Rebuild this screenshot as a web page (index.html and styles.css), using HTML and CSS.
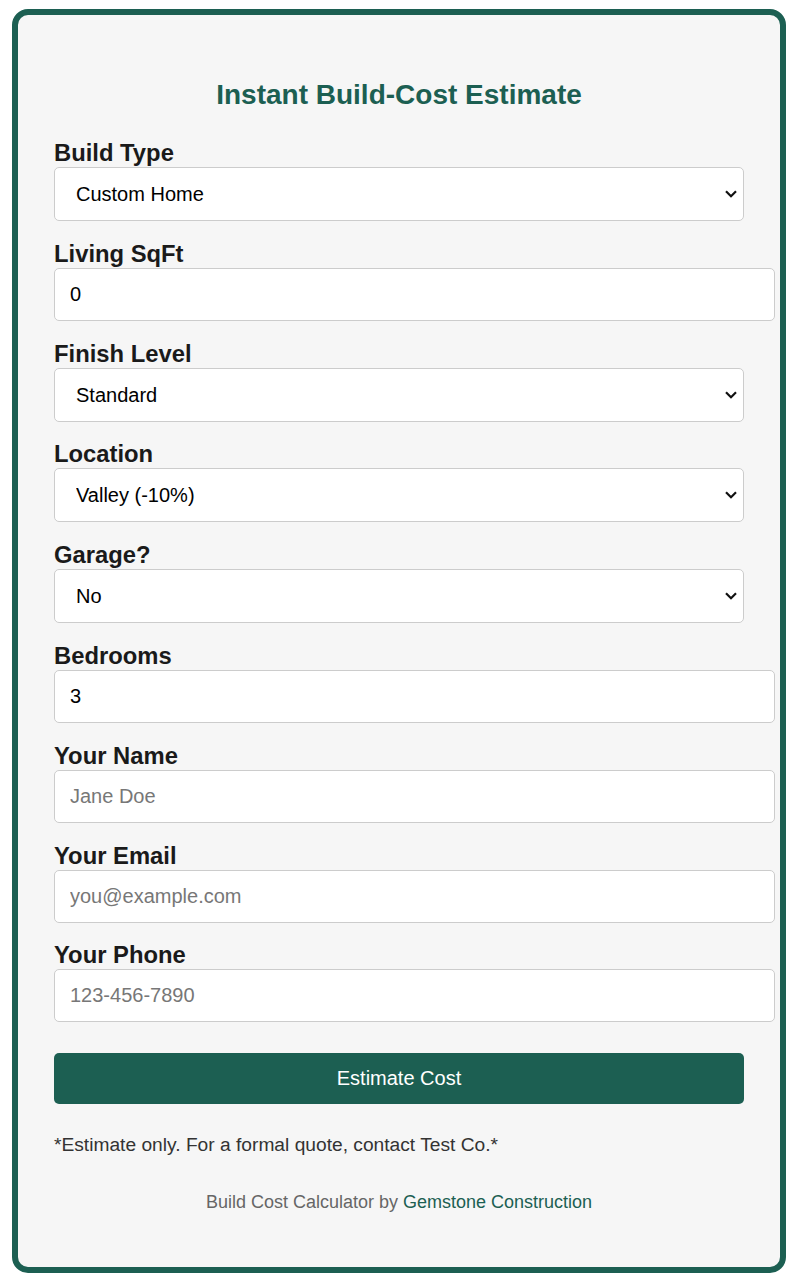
FILE: index.html
```html
<!DOCTYPE html>
<html lang="en">
<head>
    <meta charset="UTF-8">
    <meta name="viewport" content="width=device-width, initial-scale=1.0">
    <title>Build Cost Calculator</title>
    <link rel="stylesheet" href="styles.css">
</head>
<body>
    <div class="calc-box">
        <h2 class="calc-title">Instant Build-Cost Estimate</h2>

        <form class="calc-form" onsubmit="return false;">
            <div class="field">
                <label for="buildType">Build Type</label>
                <div class="select-wrap">
                    <select id="buildType" class="field-select">
                        <option>Custom Home</option>
                        <option>Addition</option>
                        <option>Remodel</option>
                    </select>
                    <svg class="chevron" width="12" height="8" viewBox="0 0 12 8"><path d="M1 1.2 6 6.2 11 1.2" fill="none" stroke="#111" stroke-width="2.2"/></svg>
                </div>
            </div>

            <div class="field">
                <label for="sqft">Living SqFt</label>
                <input type="number" id="sqft" class="field-input" value="0">
            </div>

            <div class="field">
                <label for="finish">Finish Level</label>
                <div class="select-wrap">
                    <select id="finish" class="field-select">
                        <option>Standard</option>
                        <option>Premium</option>
                        <option>Luxury</option>
                    </select>
                    <svg class="chevron" width="12" height="8" viewBox="0 0 12 8"><path d="M1 1.2 6 6.2 11 1.2" fill="none" stroke="#111" stroke-width="2.2"/></svg>
                </div>
            </div>

            <div class="field">
                <label for="location">Location</label>
                <div class="select-wrap">
                    <select id="location" class="field-select">
                        <option>Valley (-10%)</option>
                        <option>City</option>
                        <option>Mountain (+15%)</option>
                    </select>
                    <svg class="chevron" width="12" height="8" viewBox="0 0 12 8"><path d="M1 1.2 6 6.2 11 1.2" fill="none" stroke="#111" stroke-width="2.2"/></svg>
                </div>
            </div>

            <div class="field">
                <label for="garage">Garage?</label>
                <div class="select-wrap">
                    <select id="garage" class="field-select">
                        <option>No</option>
                        <option>Yes</option>
                    </select>
                    <svg class="chevron" width="12" height="8" viewBox="0 0 12 8"><path d="M1 1.2 6 6.2 11 1.2" fill="none" stroke="#111" stroke-width="2.2"/></svg>
                </div>
            </div>

            <div class="field">
                <label for="bedrooms">Bedrooms</label>
                <input type="number" id="bedrooms" class="field-input" value="3">
            </div>

            <div class="field">
                <label for="name">Your Name</label>
                <input type="text" id="name" class="field-input" placeholder="Jane Doe">
            </div>

            <div class="field">
                <label for="email">Your Email</label>
                <input type="email" id="email" class="field-input" placeholder="you@example.com">
            </div>

            <div class="field">
                <label for="phone">Your Phone</label>
                <input type="tel" id="phone" class="field-input" placeholder="123-456-7890">
            </div>

            <button type="submit" class="calc-btn">Estimate Cost</button>
        </form>

        <p class="disclaimer">*Estimate only. For a formal quote, contact Test Co.*</p>

        <p class="credit">Build Cost Calculator by <a href="#">Gemstone Construction</a></p>
    </div>
</body>
</html>
```

FILE: styles.css
```css
body {
    margin: 0;
    padding: 9px 16px 13px 12px;
    background: #fff;
    font-family: "Liberation Sans", Arial, Helvetica, sans-serif;
    color: #1a1a1a;
}

.calc-box {
    background: #f6f6f6;
    border: 6px solid #1c5f52;
    border-radius: 16px;
    padding: 0 36px;
}

.calc-title {
    text-align: center;
    color: #1c5f52;
    font-size: 28px;
    font-weight: bold;
    margin: 64px 0 28px;
}

.field {
    margin-bottom: 18.8px;
}

.field label {
    display: block;
    font-size: 23.8px;
    font-weight: bold;
    color: #1a1a1a;
}

.field-input,
.field-select {
    display: block;
    font-family: "Liberation Sans", Arial, Helvetica, sans-serif;
    font-size: 20px;
    color: #000;
    background: #fff;
    border: 1px solid #ccc;
    border-radius: 5px;
    outline: none;
}

.field-input {
    width: 100%;
    padding: 14px 15px 14px 15px;
    max-width: 689px;
}

.select-wrap {
    position: relative;
}

.field-select {
    -webkit-appearance: none;
    appearance: none;
    box-sizing: border-box;
    width: 100%;
    height: 54px;
    padding: 0 30px 0 21px;
}

.chevron {
    position: absolute;
    right: 7px;
    top: 23px;
    pointer-events: none;
}

.field-input::placeholder {
    color: #777;
}

.calc-btn {
    display: block;
    width: 100%;
    height: 51px;
    margin-top: 31px;
    background: #1c5f52;
    color: #fff;
    font-family: "Liberation Sans", Arial, Helvetica, sans-serif;
    font-size: 20px;
    border: none;
    border-radius: 5px;
    cursor: pointer;
}

.disclaimer {
    font-size: 19.2px;
    color: #333;
    margin: 30px 0 0;
}

.credit {
    text-align: center;
    font-size: 18px;
    color: #666;
    margin: 36px 0 0;
    padding-bottom: 54px;
}

.credit a {
    color: #1c5f52;
    text-decoration: none;
}
```
